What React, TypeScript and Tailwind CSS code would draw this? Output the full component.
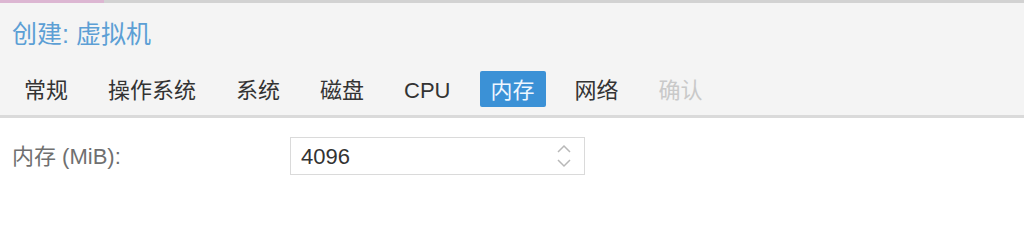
import React from "react";

const tabs = ["常规", "操作系统", "系统", "磁盘", "CPU", "内存", "网络", "确认"];

export default function App() {
  return (
    <div
      className="w-[1024px] h-[239px] bg-white overflow-hidden"
      style={{ fontFamily: '"Liberation Sans", "Noto Sans CJK SC", sans-serif' }}
    >
      <div className="flex h-[3px]">
        <div className="w-[104px] bg-[#dcb6d2]" />
        <div className="flex-1 bg-[#d2d2d2]" />
      </div>
      <div className="bg-[#f4f4f4] h-[115px] flex flex-col border-b-[3px] border-[#dadada]">
        <div className="pl-[12px] pt-[14px] h-[68px] text-[25px] leading-[34px] text-[#5c9fd5]">
          创建: 虚拟机
        </div>
        <div className="flex items-center pl-[13px] gap-[18px] h-[36px]">
          {tabs.map((t) => {
            const active = t === "内存";
            const disabled = t === "确认";
            return (
              <div
                key={t}
                className={
                  "h-[36px] px-[11px] pt-[2px] flex items-center text-[22px] rounded-[2px] " +
                  (active
                    ? "bg-[#3b91d6] text-[#eef6ff]"
                    : disabled
                    ? "text-[#c9c9c9]"
                    : "text-[#333333]")
                }
              >
                {t}
              </div>
            );
          })}
        </div>
      </div>
      <div className="flex items-center pt-[19px]">
        <div className="w-[290px] pl-[12px] text-[22px] text-[#707070]">内存 (MiB):</div>
        <div className="w-[295px] h-[38px] border border-[#dadada] bg-white flex items-center pl-[10px] pr-[12px]">
          <span className="flex-1 text-[22px] text-[#333333]">4096</span>
          <svg width="16" height="26" viewBox="0 0 16 26" fill="none" stroke="#b8b8b8" strokeWidth="1.5">
            <path d="M2 9 L8 3 L14 9" />
            <path d="M2 17 L8 23 L14 17" />
          </svg>
        </div>
      </div>
    </div>
  );
}
